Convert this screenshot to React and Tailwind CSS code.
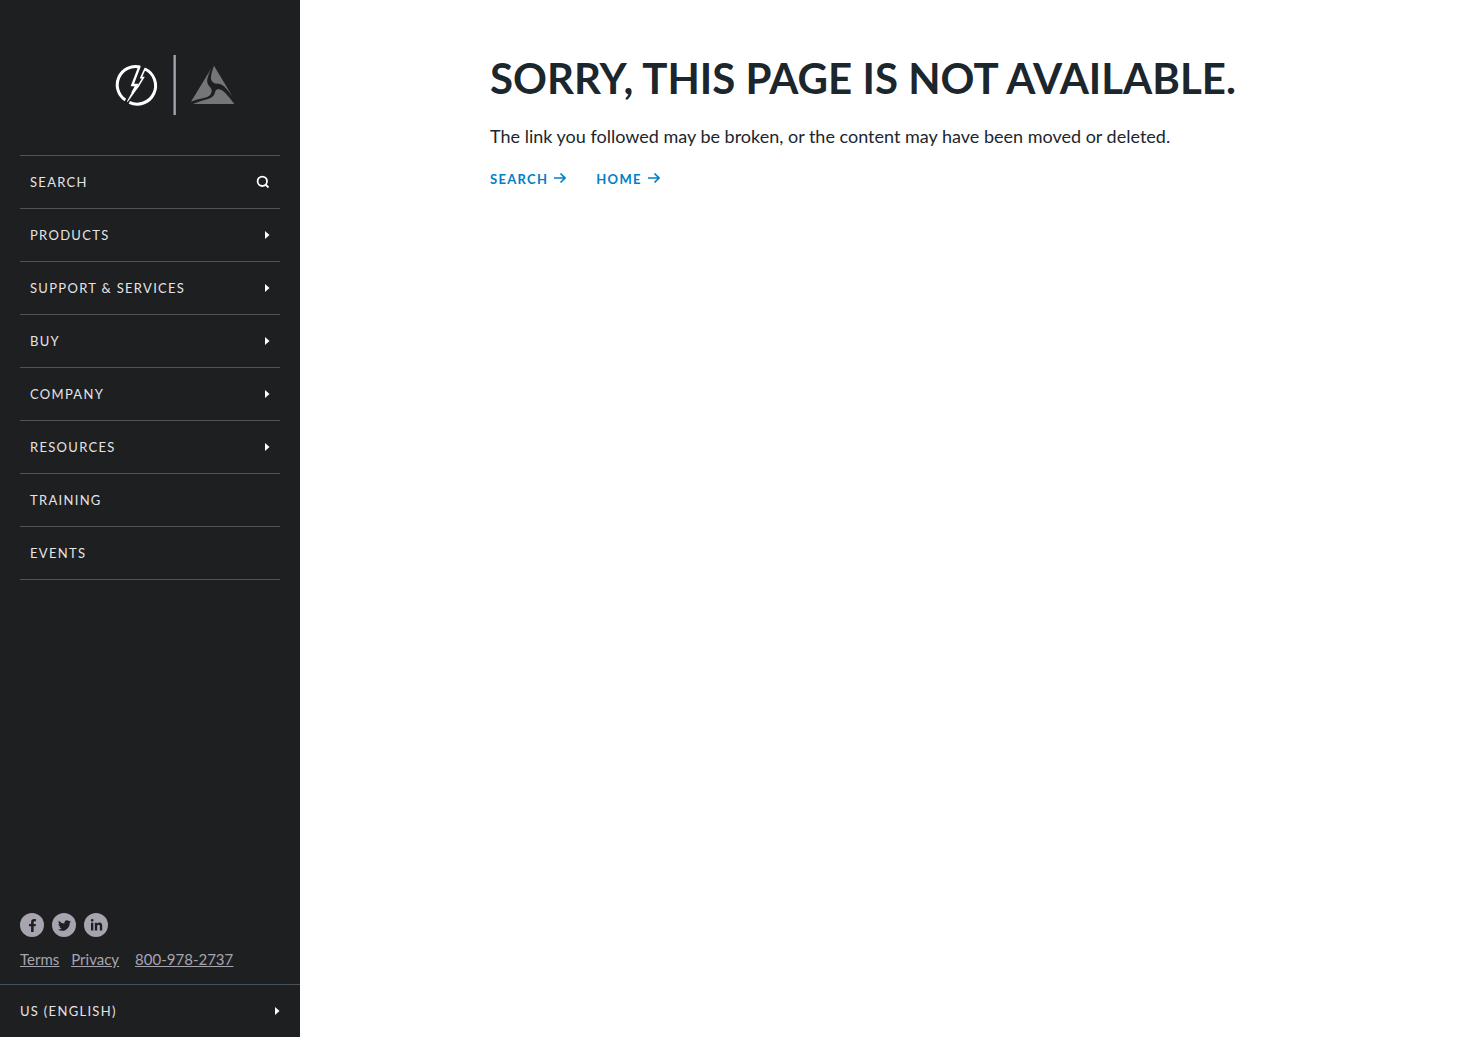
import React from 'react';
import { FaFacebookF, FaTwitter, FaLinkedinIn } from 'react-icons/fa';

const navItems = [
  { label: 'Products', hasMenu: true },
  { label: 'Support & Services', hasMenu: true },
  { label: 'Buy', hasMenu: true },
  { label: 'Company', hasMenu: true },
  { label: 'Resources', hasMenu: true },
  { label: 'Training', hasMenu: false },
  { label: 'Events', hasMenu: false },
];

const socialLinks = [
  { label: 'Facebook', Icon: FaFacebookF },
  { label: 'Twitter', Icon: FaTwitter },
  { label: 'LinkedIn', Icon: FaLinkedinIn },
];

function Logo() {
  return (
    <svg width="120" height="60" viewBox="0 0 360 180" fill="none" aria-hidden="true">
      {/* Ring and bolt */}
      <g stroke="#fff" strokeLinejoin="miter">
        <path d="M31 135 A55 55 0 0 1 75 36" strokeWidth="9" />
        <path d="M43 142 A55 55 0 0 0 90 42" strokeWidth="9" />
        <path d="M74 33 L52 90 H65 L52 114" strokeWidth="7" />
        <path d="M91 39 L78 68 H85 L71 91 L52 114" strokeWidth="5" />
      </g>
      <path d="M60 95 L73 92 L38 141 L36 139 Z" fill="#fff" />
      {/* Divider */}
      <path d="M179 0 V180" stroke="#a7a4b0" strokeWidth="7" />
      {/* Triangle */}
      <g fill="#757678">
        <path d="M289 40 L228 140 Q246 133 264 130 Q289 125 290 109 Q291 102 285 96 Q274 86 277 72 Q281 56 289 40 Z" />
        <path d="M297 32 L352 124 Q341 108 327 94 Q315 84 303 86 Q291 84 288 72 Q287 58 297 32 Z" />
        <path d="M234 147 H358 Q345 129 331 114 Q318 100 307 103 Q301 105 299 115 Q296 128 279 132 Q254 138 234 147 Z" />
      </g>
    </svg>
  );
}

function Caret() {
  return (
    <svg width="5" height="8" viewBox="0 0 5 8" fill="#fff" aria-hidden="true">
      <path d="M0 0 L4.5 4 L0 8 Z" />
    </svg>
  );
}

function Arrow() {
  return (
    <svg width="12" height="12" viewBox="0 0 12 12" fill="none" stroke="currentColor" strokeWidth="1.6" aria-hidden="true">
      <path d="M0 5 H11 M6.5 0.5 L11 5 L6.5 9.5" />
    </svg>
  );
}

function NavItem({ label, hasMenu }) {
  if (!hasMenu) {
    return (
      <a href="#" className="flex h-[52px] items-center px-2.5 leading-[21px] uppercase">
        {label}
      </a>
    );
  }
  return (
    <button type="button" className="flex h-[52px] w-full items-center justify-between px-2.5 leading-[21px] uppercase tracking-widest">
      {label}
      <Caret />
    </button>
  );
}

export default function App() {
  return (
    <div className="flex min-h-screen bg-white font-['Lato',sans-serif] text-[#1c262d]">
      <aside className="flex w-[300px] shrink-0 flex-col bg-[#1e1f21] text-[13px] tracking-widest text-[#e4e4e6]">
        <a href="#" aria-label="Home" className="flex justify-center pt-[55px] pb-10 pl-[50px]">
          <Logo />
        </a>

        <nav className="px-5">
          <ul className="divide-y divide-[#505255] border-y border-[#505255]">
            <li>
              <button type="button" className="flex h-[52px] w-full items-center justify-between px-2.5 leading-[21px] uppercase tracking-widest">
                Search
                <svg width="14" height="14" viewBox="0 0 14 14" fill="none" stroke="#fff" strokeWidth="1.8" aria-hidden="true">
                  <circle cx="6.3" cy="6.3" r="4.7" />
                  <path d="M9.5 9.5 L12.5 12.5" />
                </svg>
              </button>
            </li>
            {navItems.map((item) => (
              <li key={item.label}>
                <NavItem {...item} />
              </li>
            ))}
          </ul>
        </nav>

        {/* Footer */}
        <div className="mt-auto">
          <div className="flex gap-2 px-5">
            {socialLinks.map(({ label, Icon }) => (
              <a
                key={label}
                href="#"
                aria-label={label}
                className="flex size-6 items-center justify-center rounded-full bg-[#a7a4b0] text-[#1e1f21]"
              >
                <Icon size={13} />
              </a>
            ))}
          </div>
          <div className="flex px-5 pt-3 pb-[15px] text-[15px] leading-5 tracking-normal text-[#a7a4b0] underline">
            <a href="#" className="mr-3">Terms</a>
            <a href="#" className="mr-4">Privacy</a>
            <a href="tel:800-978-2737">800-978-2737</a>
          </div>
          <button
            type="button"
            className="flex h-[53px] w-full items-center justify-between border-t border-[#47525a] px-5 leading-[21px] uppercase tracking-widest"
          >
            US (English)
            <Caret />
          </button>
        </div>
      </aside>

      <main className="flex-1">
        <div className="mx-auto max-w-[800px] pt-[54px]">
          <h1 className="text-[42px] leading-12 font-bold uppercase">Sorry, this page is not available.</h1>
          <p className="mt-[22px] text-lg leading-6">
            The link you followed may be broken, or the content may have been moved or deleted.
          </p>
          <div className="mt-[21px] flex gap-[30px] text-[13px] leading-5 font-bold tracking-widest text-[#0080c8] uppercase">
            <a href="#" className="flex items-center gap-1.5">
              Search
              <Arrow />
            </a>
            <a href="#" className="flex items-center gap-1.5">
              Home
              <Arrow />
            </a>
          </div>
        </div>
      </main>
    </div>
  );
}
